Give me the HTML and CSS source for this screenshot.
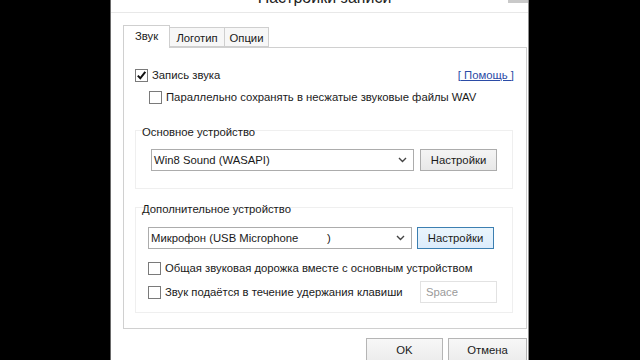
FILE: index.html
```html
<!DOCTYPE html>
<html lang="ru">
<head>
<meta charset="utf-8">
<title>Настройки записи</title>
<link rel="stylesheet" href="styles.css">
</head>
<body>
<div class="dialog">
  <div class="titlebar">
    <div class="title">Настройки записи</div>
    <div class="winbtn"></div>
  </div>
  <div class="content">
    <div class="tabs">
      <div class="tab active">Звук</div>
      <div class="tab t2">Логотип</div>
      <div class="tab t3">Опции</div>
    </div>
    <div class="panel">
      <div class="row row1">
        <label class="check">
          <span class="box"><svg width="11" height="11" viewBox="0 0 11 11"><path d="M1.8 5.6 L4.3 8.3 L9.3 1.8" fill="none" stroke="#111" stroke-width="2"/></svg></span>
          <span>Запись звука</span>
        </label>
        <a class="help" href="#">[ Помощь ]</a>
      </div>
      <div class="row row2">
        <label class="check">
          <span class="box"></span>
          <span>Параллельно сохранять в несжатые звуковые файлы WAV</span>
        </label>
      </div>

      <div class="group g1">
        <div class="group-label">Основное устройство</div>
        <div class="device-row">
          <div class="select s1"><span>Win8 Sound (WASAPI)</span><svg class="chev" width="9" height="6" viewBox="0 0 9 6"><path d="M1 1 L4.5 4.5 L8 1" fill="none" stroke="#444" stroke-width="1.4"/></svg></div>
          <div class="btn">Настройки</div>
        </div>
      </div>

      <div class="group g2">
        <div class="group-label">Дополнительное устройство</div>
        <div class="device-row">
          <div class="select s2"><span class="mic">Микрофон (USB Microphone</span><span>)</span><svg class="chev" width="9" height="6" viewBox="0 0 9 6"><path d="M1 1 L4.5 4.5 L8 1" fill="none" stroke="#444" stroke-width="1.4"/></svg></div>
          <div class="btn focus">Настройки</div>
        </div>
        <div class="row row3">
          <label class="check">
            <span class="box"></span>
            <span>Общая звуковая дорожка вместе с основным устройством</span>
          </label>
        </div>
        <div class="row row4">
          <label class="check">
            <span class="box"></span>
            <span>Звук подаётся в течение удержания клавиши</span>
          </label>
          <div class="keyfield">Space</div>
        </div>
      </div>
    </div>
    <div class="footer">
      <div class="btn fbtn ok">OK</div>
      <div class="btn fbtn cancel">Отмена</div>
    </div>
  </div>
</div>
</body>
</html>
```

FILE: styles.css
```css
html, body {
  margin: 0;
  padding: 0;
  background: #000;
  width: 640px;
  height: 360px;
  overflow: hidden;
  font-family: "Liberation Sans", Arial, sans-serif;
  font-size: 11.3px;
  color: #1a1a1a;
}

.dialog {
  margin-left: 110px;
  width: 417px;
  height: 360px;
  border-left: 1px solid #6a6a6a;
  border-right: 1px solid #8e8e8e;
  background: #fff;
  overflow: hidden;
}

.titlebar {
  height: 12px;
  border-bottom: 1px solid #e8e8e8;
  display: flex;
  align-items: flex-start;
  overflow: hidden;
}

.title {
  flex: 1;
  text-align: center;
  padding-left: 30px;
  font-size: 16px;
  line-height: 16px;
  margin-top: -10px;
  color: #222;
}

.winbtn {
  width: 20px;
  height: 3px;
  background: #c9c9c9;
}

.content {
  padding: 12px 1px 0 12px;
}

.tabs {
  display: flex;
  align-items: flex-end;
  height: 23px;
  margin-bottom: -1px;
  position: relative;
  z-index: 1;
}

.tab {
  box-sizing: border-box;
  border: 1px solid #cfcfcf;
  text-align: center;
  line-height: 14px;
  padding-top: 3px;
  background: #f7f7f7;
  height: 20px;
  margin-bottom: 1px;
}

.tab.active {
  width: 47px;
  height: 23px;
  margin-bottom: 0;
  border-bottom: none;
  background: #fff;
  position: relative;
  z-index: 2;
}

.tab.t2 {
  width: 56px;
  margin-left: -1px;
}

.tab.t3 {
  width: 45px;
  margin-left: -1px;
}

.panel {
  box-sizing: border-box;
  width: 404px;
  height: 282px;
  border: 1px solid #d0d0d0;
  padding: 18px 12px 0 11px;
}

.row {
  display: flex;
  align-items: center;
  height: 18px;
}

.row1 {
  justify-content: space-between;
}

.row2 {
  margin-top: 4px;
  padding-left: 14px;
}

.check {
  display: flex;
  align-items: center;
  gap: 4px;
  white-space: nowrap;
}

.box {
  box-sizing: border-box;
  width: 13px;
  height: 13px;
  border: 1px solid #7a7a7a;
  background: #fff;
  display: flex;
  align-items: center;
  justify-content: center;
}

.box svg {
  display: block;
}

.help {
  color: #2b4ba6;
  text-decoration: underline;
}

.group {
  box-sizing: border-box;
  width: 378px;
  border: 1px solid #efefef;
}

.group-label {
  line-height: 14px;
  margin-top: -6px;
  padding-left: 6px;
}

.g1 {
  margin-top: 24px;
  padding: 0 15px 17px 0;
}

.g1 .device-row {
  margin-top: 10px;
  padding-left: 15px;
}

.g2 {
  margin-top: 18px;
  padding: 0 15px 9px 0;
}

.g2 .device-row {
  margin-top: 11px;
  padding-left: 12px;
}

.device-row {
  display: flex;
  gap: 6px;
}

.g2 .device-row {
  gap: 5px;
}

.select {
  box-sizing: border-box;
  height: 22px;
  border: 1px solid #acacac;
  background: #fff;
  display: flex;
  align-items: center;
  padding: 0 6px 0 2px;
}

.s1 {
  width: 263px;
}

.s2 {
  width: 264px;
}

.mic {
  width: 176px;
}

.chev {
  margin-left: auto;
}

.btn {
  box-sizing: border-box;
  width: 77px;
  height: 22px;
  border: 1px solid #acacac;
  background: linear-gradient(#f4f4f4, #e8e8e8);
  display: flex;
  align-items: center;
  justify-content: center;
}

.btn.focus {
  border-color: #3c7fb1;
  background: linear-gradient(#eaf5fc, #dcecfc);
}

.row3 {
  margin-top: 10px;
  padding-left: 12px;
}

.row4 {
  margin-top: 4px;
  height: 22px;
  padding-left: 12px;
}

.keyfield {
  box-sizing: border-box;
  margin-left: auto;
  width: 77px;
  height: 22px;
  border: 1px solid #e2e2e2;
  color: #9a9a9a;
  padding-left: 5px;
  display: flex;
  align-items: center;
}

.footer {
  display: flex;
  justify-content: flex-end;
  gap: 5px;
  margin-top: 9px;
}

.fbtn {
  width: 77px;
  height: 24px;
  border-color: #b5b5b5;
  background: linear-gradient(#f7f7f7, #ececec);
}

.fbtn.cancel {
  width: 79px;
}
```
